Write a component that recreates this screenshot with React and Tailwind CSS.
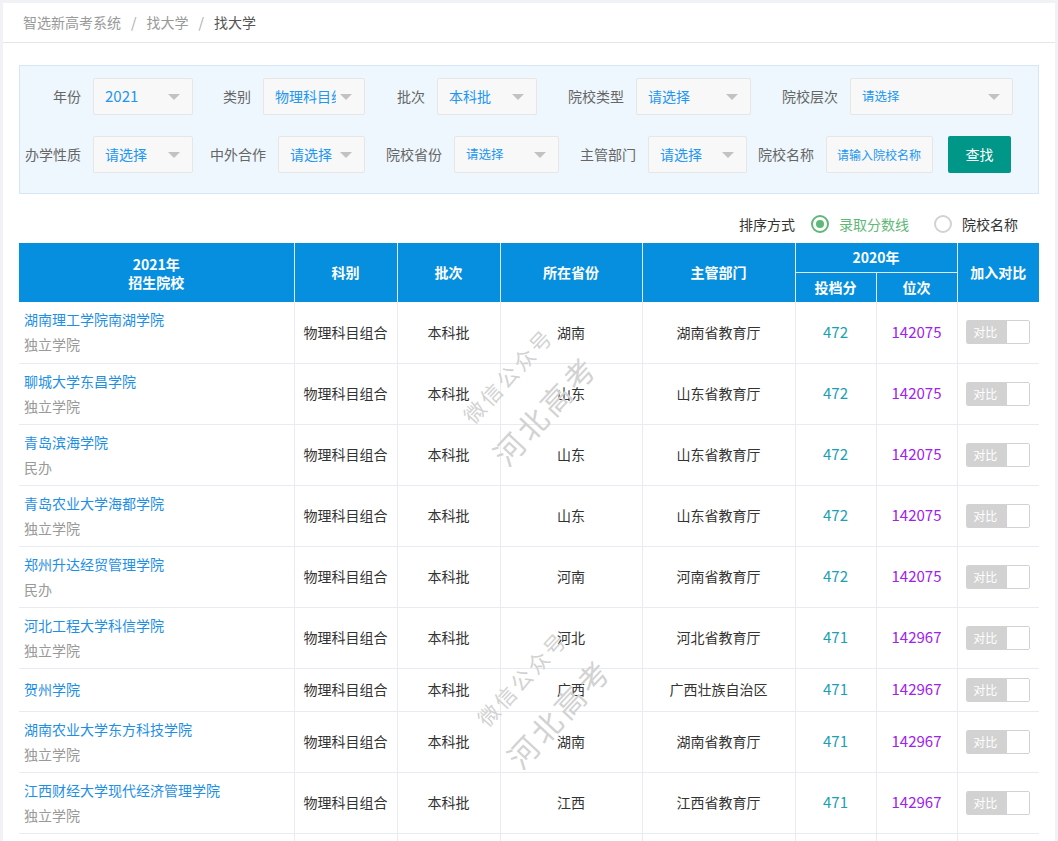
import React from "react";

const rows = [
  { name: "湖南理工学院南湖学院", type: "独立学院", prov: "湖南", dept: "湖南省教育厅", score: "472", rank: "142075" },
  { name: "聊城大学东昌学院", type: "独立学院", prov: "山东", dept: "山东省教育厅", score: "472", rank: "142075" },
  { name: "青岛滨海学院", type: "民办", prov: "山东", dept: "山东省教育厅", score: "472", rank: "142075" },
  { name: "青岛农业大学海都学院", type: "独立学院", prov: "山东", dept: "山东省教育厅", score: "472", rank: "142075" },
  { name: "郑州升达经贸管理学院", type: "民办", prov: "河南", dept: "河南省教育厅", score: "472", rank: "142075" },
  { name: "河北工程大学科信学院", type: "独立学院", prov: "河北", dept: "河北省教育厅", score: "471", rank: "142967" },
  { name: "贺州学院", type: "", prov: "广西", dept: "广西壮族自治区", score: "471", rank: "142967" },
  { name: "湖南农业大学东方科技学院", type: "独立学院", prov: "湖南", dept: "湖南省教育厅", score: "471", rank: "142967" },
  { name: "江西财经大学现代经济管理学院", type: "独立学院", prov: "江西", dept: "江西省教育厅", score: "471", rank: "142967" },
  { name: "湖南工程学院应用技术学院", type: "独立学院", prov: "湖南", dept: "湖南省教育厅", score: "471", rank: "142967" },
];

function Arrow() {
  return (
    <span className="ml-auto w-0 h-0 border-l-[6px] border-r-[6px] border-t-[6px] border-l-transparent border-r-transparent border-t-[#c2c2c2] shrink-0" />
  );
}

function Select({ w, text, size, clip }) {
  return (
    <div
      className={`${w} h-[37px] bg-[#f8f8f8] border border-[#e6e6e6] rounded-[2px] flex items-center pl-[11px] pr-[12px] text-[#2196f3] ${size || "text-[14px]"}`}
    >
      <span className={`whitespace-nowrap overflow-hidden ${clip ? "w-[61px]" : ""}`}>{text}</span>
      <Arrow />
    </div>
  );
}

function Label({ w, children }) {
  return <div className={`${w} text-right pr-[12px] text-[14px] text-[#666] whitespace-nowrap`}>{children}</div>;
}

function Watermark({ className }) {
  return (
    <div className={`absolute pointer-events-none -translate-x-1/2 -translate-y-1/2 -rotate-[47deg] flex flex-col items-center gap-[15px] text-[#d2d2d2] ${className}`}>
      <div className="h-[30px] leading-[30px] text-[21px] tracking-[3px] whitespace-nowrap">微信公众号</div>
      <div className="h-[40px] leading-[40px] text-[30px] tracking-[4px] whitespace-nowrap">河北高考</div>
    </div>
  );
}

export default function App() {
  return (
    <div className="relative bg-[#f0f2f5] pt-[3px] pl-[3px] pr-[3px] font-['Noto_Sans_CJK_SC',sans-serif] overflow-hidden h-[841px]">
      <div className="bg-white min-h-[838px]">
        {/* breadcrumb */}
        <div className="h-[40px] border-b border-[#e6e6e6] flex items-center pl-[20px] text-[14px] text-[#999]">
          <span>智选新高考系统</span>
          <span className="mx-[10px] text-[#aaa]">/</span>
          <span>找大学</span>
          <span className="mx-[10px] text-[#aaa]">/</span>
          <span className="text-[#555]">找大学</span>
        </div>

        <div className="px-[16px] pt-[22px]">
          {/* filters */}
          <div className="w-[1020px] h-[129px] bg-[#eef7fe] border border-[#d6e6f4] pt-[12px]">
            <div className="flex items-center">
              <Label w="w-[73px]">年份</Label>
              <Select w="w-[100px]" text="2021" size="text-[15px]" />
              <Label w="w-[70px]">类别</Label>
              <Select w="w-[102px]" text="物理科目组合" clip />
              <Label w="w-[72px]">批次</Label>
              <Select w="w-[100px]" text="本科批" />
              <Label w="w-[99px]">院校类型</Label>
              <Select w="w-[115px]" text="请选择" />
              <Label w="w-[99px]">院校层次</Label>
              <Select w="w-[163px]" text="请选择" size="text-[12.5px]" />
            </div>
            <div className="flex items-center mt-[21px]">
              <Label w="w-[73px]">办学性质</Label>
              <Select w="w-[100px]" text="请选择" />
              <Label w="w-[85px]">中外合作</Label>
              <Select w="w-[87px]" text="请选择" />
              <Label w="w-[89px]">院校省份</Label>
              <Select w="w-[105px]" text="请选择" size="text-[12.5px]" />
              <Label w="w-[89px]">主管部门</Label>
              <Select w="w-[99px]" text="请选择" />
              <Label w="w-[79px]">院校名称</Label>
              <div className="w-[107px] h-[37px] bg-[#f8f8f8] border border-[#e6e6e6] rounded-[2px] flex items-center pl-[10px] text-[12px] text-[#2196f3] whitespace-nowrap">
                请输入院校名称
              </div>
              <button className="ml-[15px] w-[63px] h-[37px] bg-[#009688] rounded-[2px] text-white text-[14px]">查找</button>
            </div>
          </div>

          {/* sort */}
          <div className="w-[1020px] mt-[15px] h-[30px] mb-[4px] flex items-center justify-end pr-[21px] text-[14px]">
            <span className="text-[#333] mr-[16px]">排序方式</span>
            <span className="w-[18px] h-[18px] rounded-full border-2 border-[#5fb878] flex items-center justify-center mr-[10px]">
              <span className="w-[8px] h-[8px] rounded-full bg-[#5fb878]" />
            </span>
            <span className="text-[#5fb878] mr-[25px]">录取分数线</span>
            <span className="w-[18px] h-[18px] rounded-full border-2 border-[#d2d2d2] mr-[10px]" />
            <span className="text-[#333]">院校名称</span>
          </div>

          {/* table */}
          <table className="w-[1020px] table-fixed border-collapse text-[14px]">
            <colgroup>
              <col className="w-[275px]" />
              <col className="w-[103px]" />
              <col className="w-[103px]" />
              <col className="w-[142px]" />
              <col className="w-[153px]" />
              <col className="w-[81px]" />
              <col className="w-[81px]" />
              <col className="w-[82px]" />
            </colgroup>
            <thead className="bg-[#078fdf] text-white font-bold">
              <tr className="h-[29px]">
                <th rowSpan={2} className="border-r border-[#dfe7ef] leading-[18px] font-bold">
                  2021年
                  <br />
                  招生院校
                </th>
                <th rowSpan={2} className="border-r border-[#dfe7ef] font-bold">科别</th>
                <th rowSpan={2} className="border-r border-[#dfe7ef] font-bold">批次</th>
                <th rowSpan={2} className="border-r border-[#dfe7ef] font-bold">所在省份</th>
                <th rowSpan={2} className="border-r border-[#dfe7ef] font-bold">主管部门</th>
                <th colSpan={2} className="border-r border-b border-[#dfe7ef] font-bold">2020年</th>
                <th rowSpan={2} className="font-bold">加入对比</th>
              </tr>
              <tr className="h-[30px]">
                <th className="border-r border-[#dfe7ef] font-bold">投档分</th>
                <th className="border-r border-[#dfe7ef] font-bold">位次</th>
              </tr>
            </thead>
            <tbody className="text-[#333]">
              {rows.map((r, i) => (
                <tr key={i} className={`${r.type ? "h-[61px]" : "h-[43px]"} border-b border-[#e8ebf2]`}>
                  <td className="border-r border-[#e8ebf2] pl-[5px] py-0 leading-[25px]">
                    <div className="text-[#1e8fe6]">{r.name}</div>
                    {r.type && <div className="text-[#999]">{r.type}</div>}
                  </td>
                  <td className="border-r border-[#e8ebf2] text-center">物理科目组合</td>
                  <td className="border-r border-[#e8ebf2] text-center">本科批</td>
                  <td className="border-r border-[#e8ebf2] text-center">{r.prov}</td>
                  <td className="border-r border-[#e8ebf2] text-center">{r.dept}</td>
                  <td className="border-r border-[#e8ebf2] text-center text-[15px] text-[#1aa0b4]">{r.score}</td>
                  <td className="border-r border-[#e8ebf2] text-center text-[15px] text-[#a020f0]">{r.rank}</td>
                  <td className="text-center">
                    <div className="inline-flex w-[64px] h-[24px] align-middle border border-[#d2d2d2] rounded-[2px] overflow-hidden">
                      <div className="w-[40px] bg-[#d2d2d2] text-white text-[12px] leading-[22px] text-left pl-[6px]">对比</div>
                      <div className="flex-1 bg-white" />
                    </div>
                  </td>
                </tr>
              ))}
            </tbody>
          </table>
        </div>
      </div>

      <Watermark className="left-[528px] top-[394px]" />
      <Watermark className="left-[542px] top-[697px]" />
    </div>
  );
}
